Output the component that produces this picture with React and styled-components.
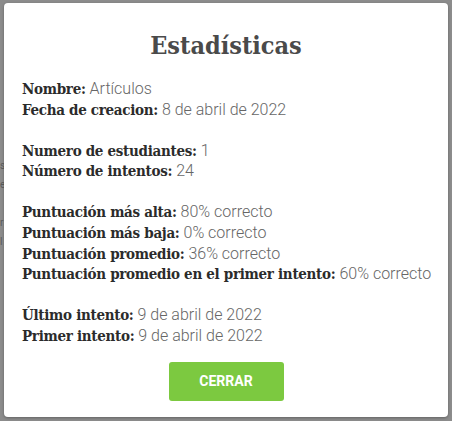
import React from "react";
import styled, { createGlobalStyle } from "styled-components";

const GlobalStyle = createGlobalStyle`
  html, body {
    margin: 0;
    padding: 0;
    background: #8c8c8c;
  }
  body {
    font-family: Roboto, "Liberation Sans", sans-serif;
  }
`;

const stats = [
  [
    ["Nombre", "Artículos"],
    ["Fecha de creacion", "8 de abril de 2022"],
  ],
  [
    ["Numero de estudiantes", "1"],
    ["Número de intentos", "24"],
  ],
  [
    ["Puntuación más alta", "80% correcto"],
    ["Puntuación más baja", "0% correcto"],
    ["Puntuación promedio", "36% correcto"],
    ["Puntuación promedio en el primer intento", "60% correcto"],
  ],
  [
    ["Último intento", "9 de abril de 2022"],
    ["Primer intento", "9 de abril de 2022"],
  ],
];

export default function App() {
  return (
    <>
      <GlobalStyle />
      <Overlay>
        <Peek>
          <span>s</span>
          <span>e</span>
          <span />
          <span>r</span>
          <span>l</span>
        </Peek>
        <Modal>
          <Title>Estadísticas</Title>
          {stats.map((group, i) => (
            <Group key={i}>
              {group.map(([label, value]) => (
                <Row key={label}>
                  <Label>{label}:</Label> <Value>{value}</Value>
                </Row>
              ))}
            </Group>
          ))}
          <Actions>
            <CloseButton>CERRAR</CloseButton>
          </Actions>
        </Modal>
      </Overlay>
    </>
  );
}

const Overlay = styled.div`
  position: relative;
  width: 452px;
  height: 421px;
  padding: 3px 4px 4px 4px;
  box-sizing: border-box;
  background: #8c8c8c;
`;

const Peek = styled.div`
  position: absolute;
  left: 0;
  top: 156px;
  display: flex;
  flex-direction: column;
  font-size: 10px;
  line-height: 19px;
  color: #5c5c5c;

  span {
    height: 19px;
  }
`;

const Modal = styled.div`
  position: relative;
  height: 100%;
  box-sizing: border-box;
  background: #ffffff;
  border-radius: 4px;
  padding: 26px 18px 0 18px;
  box-shadow: 0 1px 3px rgba(0, 0, 0, 0.3);
`;

const Title = styled.h2`
  margin: 0 0 16px 0;
  text-align: center;
  font-family: "DejaVu Serif Condensed", "DejaVu Serif", serif;
  font-weight: bold;
  font-size: 25px;
  line-height: 34px;
  color: #4a4a4a;
`;

const Group = styled.div`
  margin-bottom: 20.5px;
`;

const Row = styled.div`
  font-size: 16px;
  line-height: 20.6px;
  white-space: nowrap;
`;

const Label = styled.span`
  font-family: "DejaVu Serif Condensed", "DejaVu Serif", serif;
  font-weight: bold;
  font-size: 15px;
  letter-spacing: -0.3px;
  color: #2b2b2b;
`;

const Value = styled.span`
  font-family: Roboto, "Liberation Sans", sans-serif;
  font-weight: 300;
  color: #666666;
`;

const Actions = styled.div`
  display: flex;
  justify-content: center;
  margin-top: -5px;
`;

const CloseButton = styled.button`
  width: 115px;
  height: 39px;
  border: none;
  border-radius: 3px;
  background: #7cc940;
  color: #ffffff;
  font-family: Roboto, "Liberation Sans", sans-serif;
  font-weight: bold;
  font-size: 14px;
  cursor: pointer;
`;
